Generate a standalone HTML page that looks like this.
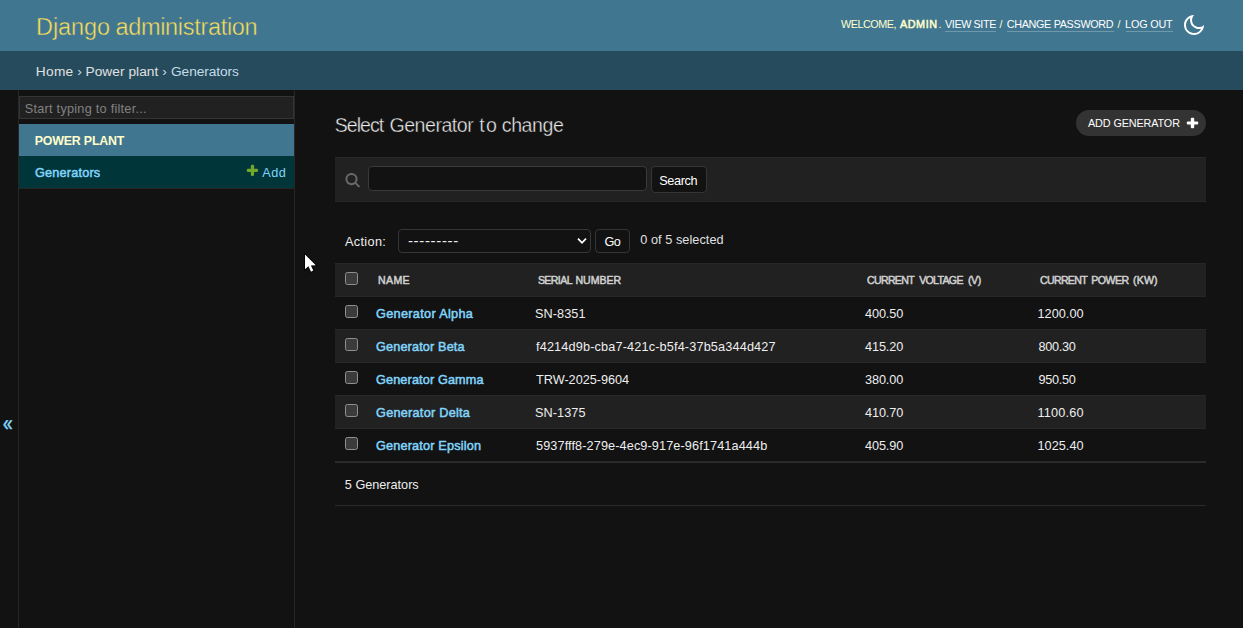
<!DOCTYPE html>
<html lang="en">
<head>
<meta charset="utf-8">
<title>Select Generator to change | Django site admin</title>
<style>
*{box-sizing:border-box}
html,body{margin:0;padding:0}
body{width:1243px;height:628px;overflow:hidden;background:#121212;color:#eee;font-family:"Liberation Sans",sans-serif;font-size:14px;position:relative}
.g{display:block;position:static;margin:0;padding:0;border:0;font-size:14px;font-weight:normal;font-style:normal}
.t{position:absolute;white-space:pre;line-height:1;display:block;font-weight:normal;font-style:normal;text-decoration:none}
i.b{font-style:normal}
.b{position:absolute;display:block}
#header{left:0;top:0;width:1243px;height:51px;background:#417690}
#breadcrumbs{left:0;top:51px;width:1243px;height:39px;background:#264b5d}
.ul{height:1px;background:rgba(255,255,255,.25);top:31px}
#toggle{left:0;top:90px;width:19px;height:538px;border-right:1px solid #272727}
#nav{left:19px;top:90px;width:276px;height:538px;border-right:1px solid #272727}
#nav-filter{left:19px;top:96px;width:275px;height:23px;border:1px solid #353535;background:#212121}
#cap{left:19px;top:124px;width:275px;height:32px;background:#417690}
#navrow{left:19px;top:156px;width:275px;height:33px;background:#00363a;border-bottom:1px solid #272727}
#addlink{left:1076px;top:110px;width:130px;height:26px;border-radius:13px;background:#333}
#toolbar{left:335px;top:157px;width:871px;height:45px;background:#212121;border-top:1px solid #272727;border-bottom:1px solid #272727}
#searchbar{left:368px;top:166px;width:279px;height:25px;border:1px solid #3a3a3a;border-radius:4px;background:#121212}
#searchbtn{left:651px;top:166px;width:56px;height:27px;border:1px solid #353535;border-radius:4px;background:#121212}
#sel{left:398px;top:229px;width:193px;height:24px;border:1px solid #363636;border-radius:4px;background:#121212}
#go{left:595px;top:229px;width:35px;height:24px;border:1px solid #353535;border-radius:4px;background:#121212}
#thead{left:335px;top:263px;width:871px;height:34px;background:#212121;border-top:1px solid #272727;border-bottom:1px solid #272727}
.row{left:335px;width:871px;height:33px;border-bottom:1px solid #272727}
.row.alt{background:#212121}
.cb{width:13px;height:13px;border:1px solid #909090;border-radius:2.5px;background:#3b3b3b;left:345px}
#pag{left:335px;top:462px;width:871px;height:44px;border-top:1px solid #2e2e2e;border-bottom:1px solid #2a2a2a}

</style>
</head>
<body>
<header class="g">
<div class="b" id="header"></div>
<div class="g" id="site-name"><span class="t" id="t_site1" style="left:36.08px;top:16.00px;font-size:23.5px;-webkit-text-stroke:0.4px #417690;color:#f5dd5d;letter-spacing:-0.120px">Django</span> <span class="t" id="t_site2" style="left:115.46px;top:16.00px;font-size:23.5px;-webkit-text-stroke:0.4px #417690;color:#f5dd5d;letter-spacing:-0.318px">administration</span></div>
<div class="g" id="user-tools"><span class="t" id="t_wel" style="left:841.00px;top:19.00px;font-size:10.8px;color:#ffc;letter-spacing:-0.463px">WELCOME,</span> <strong class="t" id="t_adm" style="left:900.00px;top:19.00px;font-size:10.8px;-webkit-text-stroke:0.5px currentColor;color:#ffc;letter-spacing:0.555px">ADMIN</strong><span class="t" id="t_dot" style="left:938.50px;top:19.00px;font-size:10.8px;color:#ffc;letter-spacing:0.000px">.</span> <a class="t" id="t_vs" style="left:945.00px;top:19.00px;font-size:10.8px;color:#fff;letter-spacing:-0.405px">VIEW SITE</a> <span class="t" id="t_s1" style="left:999.58px;top:19.00px;font-size:10.8px;color:#ffc;letter-spacing:0.000px">/</span> <a class="t" id="t_cp" style="left:1006.68px;top:19.00px;font-size:10.8px;color:#fff;letter-spacing:-0.317px">CHANGE PASSWORD</a> <span class="t" id="t_s2" style="left:1117.42px;top:19.00px;font-size:10.8px;color:#ffc;letter-spacing:0.000px">/</span> <a class="t" id="t_lo" style="left:1125.10px;top:19.00px;font-size:10.8px;color:#fff;letter-spacing:-0.180px">LOG OUT</a>
<i class="b ul" style="left:945px;width:51px"></i><i class="b ul" style="left:1007px;width:107px"></i><i class="b ul" style="left:1126px;width:47px"></i>
<svg class="b" style="left:1182px;top:13px" width="24" height="24" viewBox="0 0 24 24"><path fill="#fff" d="M10 7a7 7 0 0 0 12 4.9v.1c0 5.523-4.477 10-10 10S2 17.523 2 12 6.477 2 12 2h.1A6.979 6.979 0 0 0 10 7zm-6 5a8 8 0 0 0 15.062 3.762A9 9 0 0 1 8.238 4.938 7.999 7.999 0 0 0 4 12z"/></svg>
</div>
</header>
<nav class="g" aria-label="Breadcrumbs">
<div class="b" id="breadcrumbs"></div>
<a class="t" id="t_b1" style="left:35.86px;top:65.01px;font-size:13.7px;color:#e0e0e0;letter-spacing:0.280px">Home</a> <span class="t" id="t_b2" style="left:77.26px;top:65.01px;font-size:13.7px;color:#c4dce8;letter-spacing:0.000px">›</span> <a class="t" id="t_b3" style="left:85.52px;top:65.01px;font-size:13.7px;color:#e0e0e0;letter-spacing:0.054px">Power plant</a> <span class="t" id="t_b4" style="left:162.34px;top:65.01px;font-size:13.7px;color:#c4dce8;letter-spacing:0.000px">›</span> <span class="t" id="t_b5" style="left:171.00px;top:65.01px;font-size:13.7px;color:#c4dce8;letter-spacing:-0.060px">Generators</span>
</nav>
<div class="g" id="main">
<div class="b" id="toggle"></div>
<a class="t" id="t_tog" style="left:2.50px;top:412.55px;font-size:22.5px;-webkit-text-stroke:0.5px currentColor;transform:scaleX(.77);transform-origin:0 0;color:#81d4fa;letter-spacing:0.000px">«</a>
<nav class="g" id="nav-sidebar">
<div class="b" id="nav"></div>
<div class="b" id="nav-filter"></div>
<span class="t" id="t_ph" style="left:24.76px;top:103.00px;font-size:12.7px;color:#828282;letter-spacing:0.255px">Start typing to filter...</span>
<div class="b" id="cap"></div>
<span class="t" id="t_pp" style="left:34.68px;top:134.61px;font-size:12.4px;font-weight:bold;color:#ffc;letter-spacing:-0.180px">POWER PLANT</span>
<div class="b" id="navrow"></div>
<a class="t" id="t_gen" style="left:34.90px;top:166.81px;font-size:12.7px;-webkit-text-stroke:0.5px currentColor;color:#81d4fa;letter-spacing:0.200px">Generators</a>
<svg class="b" style="left:246px;top:164px" width="13" height="13" viewBox="0 0 13 13"><rect x="0.8" y="4.8" width="11.3" height="3.3" rx="1.3" fill="#70a82c"/><rect x="4.8" y="0.8" width="3.3" height="11.3" rx="1.3" fill="#70a82c"/></svg>
<a class="t" id="t_add" style="left:262.26px;top:166.82px;font-size:12.7px;color:#81d4fa;letter-spacing:0.480px">Add</a>
</nav>
<main class="g" id="content">
<h1 class="g"><span class="t" id="t_h1a" style="left:334.72px;top:116.40px;font-size:19.6px;-webkit-text-stroke:0.4px #121212;color:#eee;letter-spacing:-1.008px">Select</span> <span class="t" id="t_h1b" style="left:389.48px;top:116.40px;font-size:19.6px;-webkit-text-stroke:0.4px #121212;color:#eee;letter-spacing:-0.495px">Generator</span> <span class="t" id="t_h1c" style="left:479.24px;top:116.40px;font-size:19.6px;-webkit-text-stroke:0.4px #121212;color:#eee;letter-spacing:1.200px">to</span> <span class="t" id="t_h1d" style="left:501.86px;top:116.40px;font-size:19.6px;-webkit-text-stroke:0.4px #121212;color:#eee;letter-spacing:-0.468px">change</span></h1>
<div class="g object-tools">
<div class="b" id="addlink"></div>
<a class="t" id="t_ag" style="left:1088.00px;top:118.00px;font-size:10.8px;color:#fff;letter-spacing:-0.105px">ADD GENERATOR</a>
<svg class="b" style="left:1186px;top:117px" width="13" height="12" viewBox="0 0 13 12"><rect x="0.8" y="4.4" width="11.4" height="3.1" rx="1" fill="#fff"/><rect x="4.8" y="0.7" width="3.4" height="10.5" rx="1" fill="#fff"/></svg>
</div>
<div class="g" id="changelist">
<div class="b" id="toolbar"></div>
<svg class="b" style="left:344px;top:172px" width="17" height="17" viewBox="0 0 17 17"><circle cx="7.5" cy="7.1" r="5.1" fill="none" stroke="#6a6a6a" stroke-width="2"/><path d="M11.3 10.9l3.6 3.5" stroke="#6a6a6a" stroke-width="2" stroke-linecap="round"/></svg>
<div class="b" id="searchbar"></div>
<div class="b" id="searchbtn"></div>
<span class="t" id="t_search" style="left:659.26px;top:174.82px;font-size:12.7px;color:#fff;letter-spacing:-0.396px">Search</span>
<div class="g actions">
<span class="t" id="t_action" style="left:344.92px;top:235.82px;font-size:12.7px;color:#eee;letter-spacing:0.360px">Action:</span>
<div class="b" id="sel"></div>
<span class="t" id="t_dash" style="left:407.90px;top:233.41px;font-size:15px;color:#eee;letter-spacing:0.675px">---------</span>
<svg class="b" style="left:576px;top:236px" width="12" height="10" viewBox="0 0 12 10"><path d="M2 2.6l4 4.2 4-4.2" fill="none" stroke="#fff" stroke-width="1.75" stroke-linecap="butt" stroke-linejoin="miter"/></svg>
<div class="b" id="go"></div>
<span class="t" id="t_go" style="left:604.50px;top:235.82px;font-size:12.7px;color:#fff;letter-spacing:-0.540px">Go</span>
<span class="t" id="t_cnt" style="left:640.22px;top:234.10px;font-size:12.7px;color:#e0e0e0;letter-spacing:0.064px">0 of 5 selected</span>
</div>
<div class="g" id="result_list">
<div class="g thead">
<div class="b" id="thead"></div>
<i class="b cb" style="top:272px"></i>
<span class="t" id="t_hn" style="left:378.10px;top:275.01px;font-size:10.6px;-webkit-text-stroke:0.5px currentColor;color:#d0d0d0;letter-spacing:0.300px">NAME</span>
<div class="g"><span class="t" id="t_hs1" style="left:537.90px;top:275.01px;font-size:10.6px;-webkit-text-stroke:0.5px currentColor;color:#d0d0d0;letter-spacing:-0.600px">SERIAL</span> <span class="t" id="t_hs2" style="left:575.50px;top:275.01px;font-size:10.6px;-webkit-text-stroke:0.5px currentColor;color:#d0d0d0;letter-spacing:-0.072px">NUMBER</span></div>
<div class="g"><span class="t" id="t_hv1" style="left:867.00px;top:275.01px;font-size:10.6px;-webkit-text-stroke:0.5px currentColor;color:#d0d0d0;letter-spacing:-0.690px">CURRENT</span> <span class="t" id="t_hv2" style="left:919.14px;top:275.01px;font-size:10.6px;-webkit-text-stroke:0.5px currentColor;color:#d0d0d0;letter-spacing:-0.690px">VOLTAGE</span> <span class="t" id="t_hv3" style="left:967.88px;top:275.01px;font-size:10.6px;-webkit-text-stroke:0.5px currentColor;color:#d0d0d0;letter-spacing:-0.360px">(V)</span></div>
<div class="g"><span class="t" id="t_hp1" style="left:1040.00px;top:275.01px;font-size:10.6px;-webkit-text-stroke:0.5px currentColor;color:#d0d0d0;letter-spacing:-0.690px">CURRENT</span> <span class="t" id="t_hp2" style="left:1091.36px;top:275.01px;font-size:10.6px;-webkit-text-stroke:0.5px currentColor;color:#d0d0d0;letter-spacing:-0.585px">POWER</span> <span class="t" id="t_hp3" style="left:1133.12px;top:275.01px;font-size:10.6px;-webkit-text-stroke:0.5px currentColor;color:#d0d0d0;letter-spacing:0.120px">(KW)</span></div>
</div>
<div class="g tr"><div class="b row" style="top:297px"></div><i class="b cb" style="top:305px"></i><a class="t" id="t_n0" style="left:376.00px;top:308.21px;font-size:12.7px;-webkit-text-stroke:0.5px currentColor;color:#81d4fa;letter-spacing:0.321px">Generator Alpha</a> <span class="t" id="t_s0x" style="left:535.10px;top:308.22px;font-size:12.7px;color:#eee;letter-spacing:0.060px">SN-8351</span> <span class="t" id="t_v0" style="left:865.00px;top:308.22px;font-size:12.7px;color:#eee;letter-spacing:-0.108px">400.50</span> <span class="t" id="t_p0" style="left:1037.52px;top:308.22px;font-size:12.7px;color:#eee;letter-spacing:0.030px">1200.00</span></div>
<div class="g tr"><div class="b row alt" style="top:330px"></div><i class="b cb" style="top:338px"></i><a class="t" id="t_n1" style="left:376.00px;top:341.21px;font-size:12.7px;-webkit-text-stroke:0.5px currentColor;color:#81d4fa;letter-spacing:0.138px">Generator Beta</a> <span class="t" id="t_s1x" style="left:536.00px;top:341.22px;font-size:12.7px;color:#eee;letter-spacing:0.154px">f4214d9b-cba7-421c-b5f4-37b5a344d427</span> <span class="t" id="t_v1" style="left:865.00px;top:341.22px;font-size:12.7px;color:#eee;letter-spacing:-0.108px">415.20</span> <span class="t" id="t_p1" style="left:1038.42px;top:341.22px;font-size:12.7px;color:#eee;letter-spacing:-0.288px">800.30</span></div>
<div class="g tr"><div class="b row" style="top:363px"></div><i class="b cb" style="top:371px"></i><a class="t" id="t_n2" style="left:376.00px;top:374.21px;font-size:12.7px;-webkit-text-stroke:0.5px currentColor;color:#81d4fa;letter-spacing:0.129px">Generator Gamma</a> <span class="t" id="t_s2x" style="left:536.00px;top:374.22px;font-size:12.7px;color:#eee;letter-spacing:-0.015px">TRW-2025-9604</span> <span class="t" id="t_v2" style="left:865.00px;top:374.22px;font-size:12.7px;color:#eee;letter-spacing:-0.108px">380.00</span> <span class="t" id="t_p2" style="left:1038.42px;top:374.22px;font-size:12.7px;color:#eee;letter-spacing:-0.288px">950.50</span></div>
<div class="g tr"><div class="b row alt" style="top:396px"></div><i class="b cb" style="top:404px"></i><a class="t" id="t_n3" style="left:376.00px;top:407.21px;font-size:12.7px;-webkit-text-stroke:0.5px currentColor;color:#81d4fa;letter-spacing:0.257px">Generator Delta</a> <span class="t" id="t_s3x" style="left:535.10px;top:407.22px;font-size:12.7px;color:#eee;letter-spacing:0.060px">SN-1375</span> <span class="t" id="t_v3" style="left:865.00px;top:407.22px;font-size:12.7px;color:#eee;letter-spacing:-0.108px">410.70</span> <span class="t" id="t_p3" style="left:1037.52px;top:407.22px;font-size:12.7px;color:#eee;letter-spacing:0.180px">1100.60</span></div>
<div class="g tr"><div class="b row" style="top:429px"></div><i class="b cb" style="top:437px"></i><a class="t" id="t_n4" style="left:376.00px;top:440.21px;font-size:12.7px;-webkit-text-stroke:0.5px currentColor;color:#81d4fa;letter-spacing:0.169px">Generator Epsilon</a> <span class="t" id="t_s4x" style="left:536.00px;top:440.22px;font-size:12.7px;color:#eee;letter-spacing:0.108px">5937fff8-279e-4ec9-917e-96f1741a444b</span> <span class="t" id="t_v4" style="left:865.00px;top:440.22px;font-size:12.7px;color:#eee;letter-spacing:-0.108px">405.90</span> <span class="t" id="t_p4" style="left:1037.52px;top:440.22px;font-size:12.7px;color:#eee;letter-spacing:0.030px">1025.40</span></div>
</div>
<div class="g paginator">
<div class="b" id="pag"></div>
<span class="t" id="t_pag" style="left:344.84px;top:479.22px;font-size:12.7px;color:#eee;letter-spacing:-0.016px">5 Generators</span>
</div>
</div>
</main>
</div>
<svg class="b" style="left:300px;top:249px" width="22" height="28" viewBox="0 0 22 28"><path d="M5 5.5V20.3L8.4 17.3L11 22.7L13.3 21.6L10.9 16.4L15.8 16.2Z" fill="#fff" stroke="#000" stroke-width="1.6" stroke-linejoin="miter" paint-order="stroke"/></svg>

</body>
</html>
